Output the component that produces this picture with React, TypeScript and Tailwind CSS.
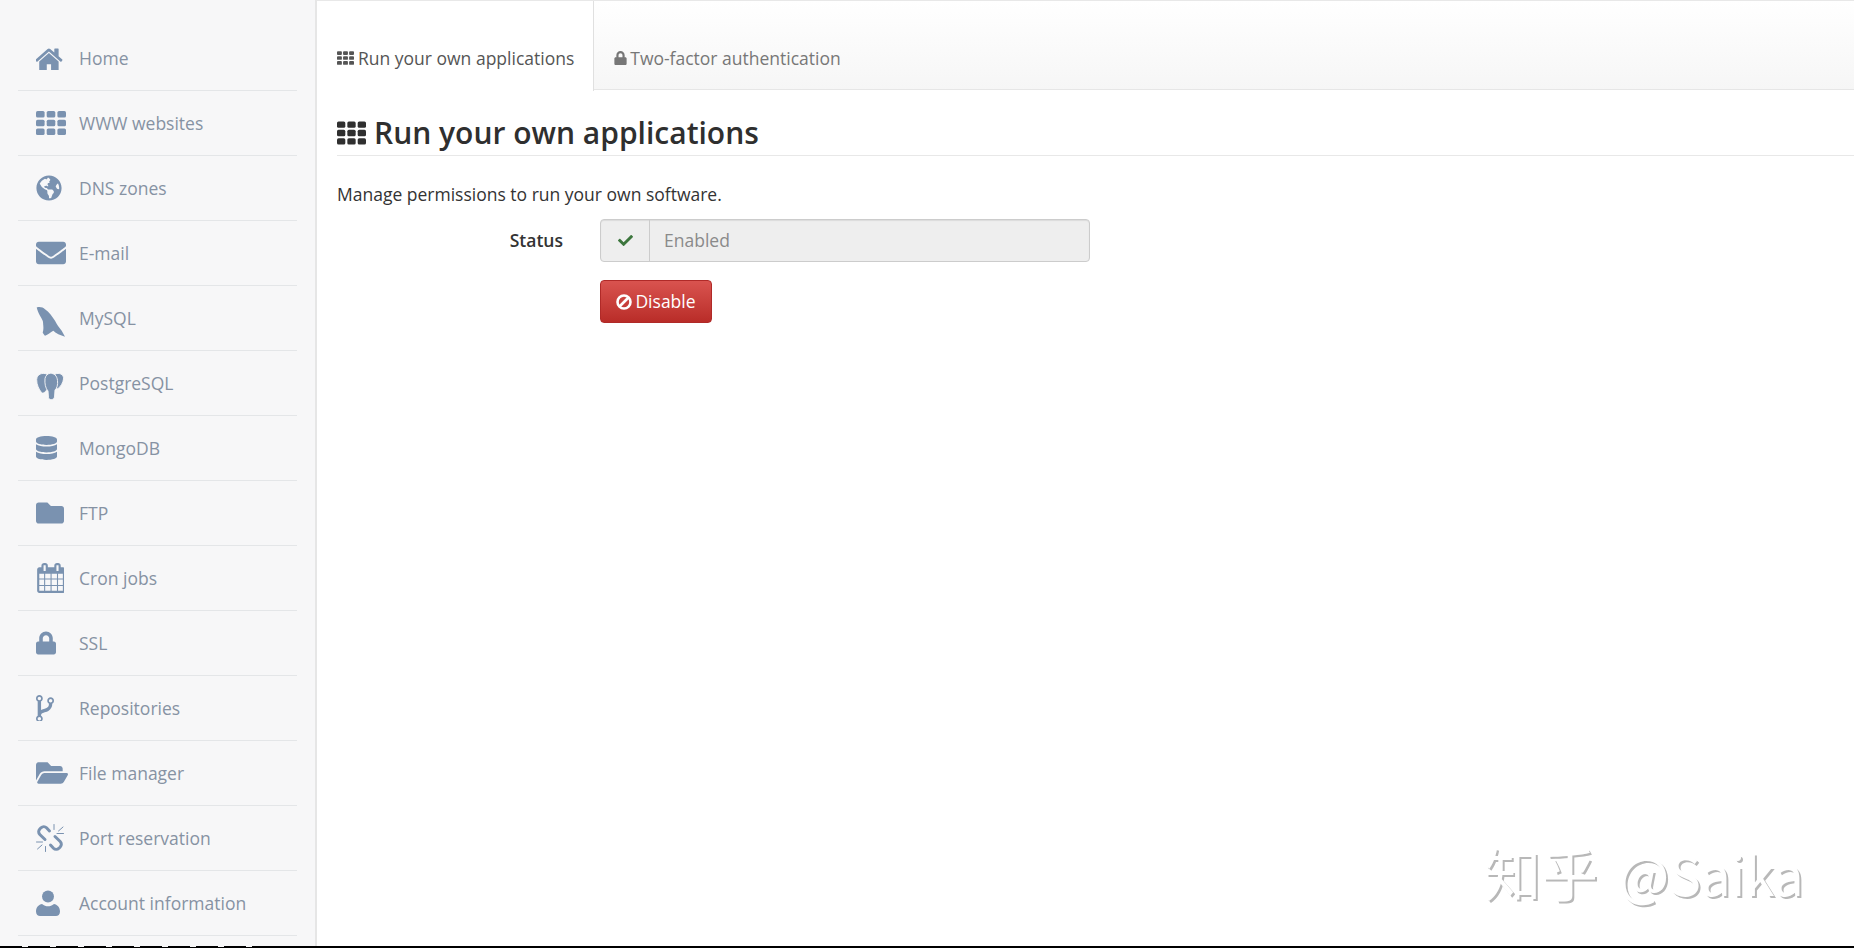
import type { ReactNode } from 'react';
import { FaGlobeAmericas, FaEnvelope, FaDatabase, FaFolder, FaLock, FaFolderOpen, FaCheck } from 'react-icons/fa';

function Grid({ className }: { className: string }) {
  return (
    <svg viewBox="0 0 30 24" fill="currentColor" className={className}>
      {[0, 10.7, 21.4].map((x) =>
        [0, 8.7, 17.4].map((y) => <rect key={`${x}-${y}`} x={x} y={y} width="8.6" height="6.6" rx="1.6" />)
      )}
    </svg>
  );
}

function Home() {
  return (
    <svg viewBox="0 170 1664 1300" fill="currentColor" className="h-[23px] w-[28px]" preserveAspectRatio="none">
      <path transform="translate(-64 0)" d="M1408 992v480q0 26-19 45t-45 19h-384v-384h-256v384h-384q-26 0-45-19t-19-45v-480q0-1 .5-3t.5-3l575-474 575 474q1 2 1 6zm223-69l-62 74q-8 9-21 11h-3q-13 0-21-7l-692-577-692 577q-12 8-24 7-13-2-21-11l-62-74q-8-10-7-23.5t11-21.5l719-599q32-26 76-26t76 26l244 204v-195q0-14 9-23t23-9h192q14 0 23 9t9 23v408l219 182q10 8 11 21.5t-7 23.5z" />
    </svg>
  );
}

function Dolphin() {
  return (
    <svg viewBox="0 0 30 38" fill="currentColor" className="h-[38px] w-[30px]">
      <path d="M0.7 8.5 C4 7.5 7 8.5 9 10.2 C13 13 16 17 19 21.8 C21 25.5 23 28.5 25.7 31.8 L29 37.8 L22.3 35.2 C20 34 18.5 32.8 17.3 31.8 C14.5 33.5 12 35.5 9 36.8 C8 35.5 7 34.5 6.7 33.5 C7.5 31 7.5 29 7.3 26.8 C7 24.5 7.3 23.5 6.7 21.8 C6 20 5 18.5 4 16.8 C2.5 14 1.5 11.5 0.7 8.5 Z" />
    </svg>
  );
}

function Elephant() {
  return (
    <svg viewBox="0 0 28 36" fill="currentColor" stroke="#f7f7f8" strokeWidth="0.9" className="h-[36px] w-[28px]">
      <g transform="translate(0 7.5)">
        <path d="M11 1.5 C6 0 1 1.5 0.7 7 C0.5 12 3 17 5.5 20 C7 21.5 9 20 11 17 Z" />
        <path d="M19 1.5 C23 0 28 1.5 27.5 6.5 C27 10 25 14 21.5 16.5 L18 12 Z" />
        <path d="M14.5 0.8 C18 0.8 21 3 21.5 8 C22 12 21 16 19 17.5 L18.5 24.5 C18 27.8 13 28 12.5 25 L12 18.5 C9.5 16 8.5 11 9 6 C9.5 3 12 0.8 14.5 0.8 Z" />
      </g>
    </svg>
  );
}

function Calendar() {
  return (
    <svg viewBox="0 0 1664 1792" fill="currentColor" fillRule="evenodd" className="h-[30px] w-[28px]">
      <path d="M192 1664h288v-288h-288v288zm352 0h320v-288h-320v288zm-352-352h288v-320h-288v320zm352 0h320v-320h-320v320zm-352-384h288v-288h-288v288zm736 736h320v-288h-320v288zm-384-736h320v-288h-320v288zm768 736h288v-288h-288v288zm-384-352h320v-320h-320v320zm-352-864v-288q0-13-9.5-22.5t-22.5-9.5h-64q-13 0-22.5 9.5t-9.5 22.5v288q0 13 9.5 22.5t22.5 9.5h64q13 0 22.5-9.5t9.5-22.5zm736 864h288v-320h-288v320zm-384-384h320v-288h-320v288zm384 0h288v-288h-288v288zm32-480v-288q0-13-9.5-22.5t-22.5-9.5h-64q-13 0-22.5 9.5t-9.5 22.5v288q0 13 9.5 22.5t22.5 9.5h64q13 0 22.5-9.5t9.5-22.5zm384-64v1280q0 52-38 90t-90 38h-1408q-52 0-90-38t-38-90v-1280q0-52 38-90t90-38h128v-96q0-66 47-113t113-47h64q66 0 113 47t47 113v96h384v-96q0-66 47-113t113-47h64q66 0 113 47t47 113v96h128q52 0 90 38t38 90z" />
    </svg>
  );
}

function Fork() {
  return (
    <svg viewBox="0 160 1024 1472" fill="currentColor" fillRule="evenodd" className="h-[26px] w-[18px]">
      <path d="M288 1504q0-40-28-68t-68-28-68 28-28 68 28 68 68 28 68-28 28-68zm0-1152q0-40-28-68t-68-28-68 28-28 68 28 68 68 28 68-28 28-68zm640 128q0-40-28-68t-68-28-68 28-28 68 28 68 68 28 68-28 28-68zm96 0q0 52-26 96.5t-70 69.5q-2 287-226 414-67 38-203 81-128 40-169.5 71t-41.5 100v26q44 25 70 69.5t26 96.5q0 80-56 136t-136 56-136-56-56-136q0-52 26-96.5t70-69.5v-820q-44-25-70-69.5t-26-96.5q0-80 56-136t136-56 136 56 56 136q0 52-26 96.5t-70 69.5v497q54-26 154-57 55-17 87.5-29.5t70.5-31 59-39.5 40.5-51 28-69.5 8.5-91.5q-44-25-70-69.5t-26-96.5q0-80 56-136t136-56 136 56 56 136z" />
    </svg>
  );
}

function Unlink() {
  return (
    <svg viewBox="0 0 28 28" fill="none" stroke="currentColor" className="h-[28px] w-[28px]">
      <g strokeWidth="3" strokeLinecap="round">
        <path d="M13.5 7 L10.5 3.8 C9 2.3 6.6 2.3 5 3.8 L3.8 5 C2.3 6.6 2.3 9 3.8 10.5 L9 15.5" />
        <path d="M14.5 21 L17.5 24.2 C19 25.7 21.4 25.7 23 24.2 L24.2 23 C25.7 21.4 25.7 19 24.2 17.5 L19 12.5" />
      </g>
      <g strokeWidth="1" strokeLinecap="round">
        <path d="M18 0.5 L18 5.5 M27 3 L22.5 7 M21 9.5 L27.5 9.5" />
        <path d="M0.5 18 L6.5 18 M1.5 25 L6 21 M9.5 22.5 L9.5 27.5" />
      </g>
    </svg>
  );
}

function User() {
  return (
    <svg viewBox="0 0 24 26" fill="currentColor" className="h-[26px] w-[24px]">
      <circle cx="12" cy="6.5" r="6" />
      <path d="M0 21.5 C0 17 3 14.5 6 14 C8 15.8 10 16.3 12 16.3 C14 16.3 16 15.8 18 14 C21 14.5 24 17 24 21.5 C24 24.5 22 26 20 26 H4 C2 26 0 24.5 0 21.5 Z" />
    </svg>
  );
}

function Ban() {
  return (
    <svg viewBox="0 0 16 16" fill="none" stroke="currentColor" strokeWidth="2.6" className="h-[16px] w-[16px]">
      <circle cx="8" cy="8" r="6.5" />
      <path d="M3.5 12.5 L12.5 3.5" />
    </svg>
  );
}

const NAV: { label: string; icon: ReactNode }[] = [
  { label: 'Home', icon: <Home /> },
  { label: 'WWW websites', icon: <Grid className="h-[24px] w-[30px]" /> },
  { label: 'DNS zones', icon: <FaGlobeAmericas className="h-[26px] w-[26px]" /> },
  { label: 'E-mail', icon: <FaEnvelope className="h-[30px] w-[30px]" /> },
  { label: 'MySQL', icon: <Dolphin /> },
  { label: 'PostgreSQL', icon: <Elephant /> },
  { label: 'MongoDB', icon: <FaDatabase className="h-[26px] w-[21px]" /> },
  { label: 'FTP', icon: <FaFolder className="h-[28px] w-[28px]" /> },
  { label: 'Cron jobs', icon: <Calendar /> },
  { label: 'SSL', icon: <FaLock className="h-[26px] w-[20px]" /> },
  { label: 'Repositories', icon: <Fork /> },
  { label: 'File manager', icon: <FaFolderOpen className="h-[30px] w-[32px]" /> },
  { label: 'Port reservation', icon: <Unlink /> },
  { label: 'Account information', icon: <User /> },
];

export default function App() {
  return (
    <div className="relative flex h-[948px] w-[1854px] overflow-hidden bg-white font-['Open_Sans',sans-serif] text-[#333]">
      {/* Sidebar */}
      <aside className="h-full w-[317px] shrink-0 border-r-2 border-[#e6e6e6] bg-[#f7f7f8] pl-[18px] pr-[18px] pt-[26px]">
        {NAV.map((n) => (
          <div key={n.label} className="flex h-[65px] items-center border-b border-[#e4e6e8] text-[17.5px] text-[#8692a3]">
            <span className="flex w-[61px] shrink-0 pl-[18px] text-[#7a92b0]">{n.icon}</span>
            <span>{n.label}</span>
          </div>
        ))}
      </aside>

      {/* Content */}
      <main className="min-w-0 flex-1 border-t border-[#e8e8e8]">
        <div className="flex h-[89px] border-b border-[#e6e6e6] bg-gradient-to-b from-white to-[#f6f6f6]">
          <div className="-mb-px flex h-[90px] items-center gap-[4px] border-r border-[#e0e0e0] bg-white pl-[20px] pr-[19px] pt-[24px] text-[17.5px] text-[#555]">
            <Grid className="h-[14px] w-[17px]" />
            <span>Run your own applications</span>
          </div>
          <div className="flex items-center gap-[3px] pl-[20px] pt-[26px] text-[17.5px] text-[#777]">
            <FaLock className="h-[14px] w-[13px]" />
            <span>Two-factor authentication</span>
          </div>
        </div>

        <div className="pl-[20px]">
          <h1 className="mt-[20px] flex h-[46px] items-center gap-[8px] border-b border-[#e8e8e8] text-[30px] font-semibold leading-none text-[#2f2f2f]">
            <Grid className="h-[24px] w-[29px]" />
            <span>Run your own applications</span>
          </h1>
          <p className="mt-[26px] text-[17.5px] leading-[24px] text-[#333]">Manage permissions to run your own software.</p>

          <div className="mt-[13px] flex items-center">
            <label className="w-[226px] text-right text-[17.5px] font-semibold">Status</label>
            <div className="ml-[37px] flex h-[43px] w-[490px] items-stretch rounded-[4px] border border-[#ccc] bg-[#eee] shadow-[inset_0_1px_1px_rgba(0,0,0,0.08)]">
              <span className="flex w-[49px] items-center justify-center border-r border-[#ccc] text-[#3c763d]">
                <FaCheck className="h-[15px] w-[15px]" />
              </span>
              <span className="flex flex-1 items-center pl-[14px] text-[17.5px] text-[#8a8a8a]">Enabled</span>
            </div>
          </div>

          <button className="ml-[263px] mt-[18px] flex h-[43px] w-[112px] items-center justify-center gap-[3px] rounded-[4px] border border-[#b02a28] bg-gradient-to-b from-[#d9534f] to-[#b92c28] text-[17.5px] text-white">
            <Ban />
            <span>Disable</span>
          </button>
        </div>
      </main>

      {/* Watermark */}
      <div className="absolute left-[1484px] top-[833px] flex items-baseline whitespace-nowrap font-['Noto_Sans_CJK_SC',sans-serif] text-[57px] leading-[76px] text-white [text-shadow:2px_2px_0_#b8b8b8]">
        <span>知乎</span>
        <span className="ml-[21px] text-[53px]">@Saika</span>
      </div>

      {/* Cut-off strip at the bottom edge */}
      <div className="absolute bottom-0 left-0 h-[1px] w-full bg-black" />
      <div className="absolute bottom-[1px] left-0 h-[1px] w-[255px] bg-[repeating-linear-gradient(90deg,#000_0_22px,transparent_22px_28px)]" />
      <div className="absolute bottom-[1px] left-[255px] right-0 h-[1px] bg-black" />
    </div>
  );
}
